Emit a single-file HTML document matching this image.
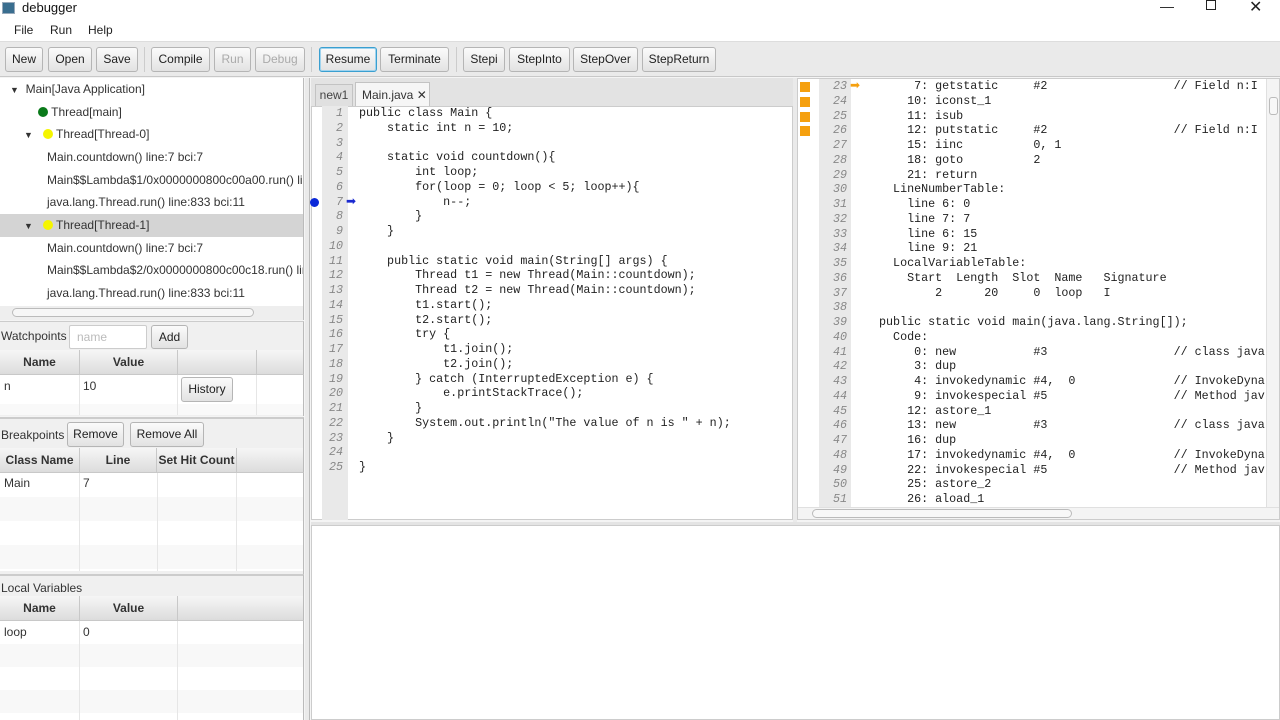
<!DOCTYPE html>
<html><head><meta charset="utf-8"><style>
*{box-sizing:border-box;margin:0;padding:0}
body{width:1280px;height:720px;overflow:hidden;background:#f4f4f4;font-family:"Liberation Sans",sans-serif;font-size:12px;color:#333;position:relative}
.a{position:absolute}
.btn{position:absolute;top:47px;height:25px;border:1px solid #b5b5b5;border-radius:3px;background:linear-gradient(#fbfbfb,#e2e2e2);font-size:12px;line-height:23px;text-align:center;color:#222}
.dis{color:#aaa}
.mono{font-family:"Liberation Mono",monospace;font-size:11.7px;line-height:14.75px;white-space:pre;color:#222}
.ln{font-family:"Liberation Mono",monospace;font-size:11.7px;line-height:14.75px;white-space:pre;color:#888;font-style:italic;text-align:right}
.tr{position:absolute;left:0;font-size:12px;line-height:22.7px;white-space:nowrap;color:#333}
.hdr{position:absolute;height:25px;background:linear-gradient(#f6f6f6,#dcdcdc);border-right:1px solid #c8c8c8;border-bottom:1px solid #c8c8c8;font-weight:bold;text-align:center;line-height:24px;font-size:12px;color:#333}
.row{position:absolute;left:0;width:303px;border-bottom:1px solid #f0f0f0}
.vl{position:absolute;width:1px;background:#e6e6e6}
</style></head><body>
<!-- title -->
<div class="a" style="left:0;top:0;width:1280px;height:20px;background:#fff"></div>
<div class="a" style="left:2px;top:2px;width:13px;height:12px;background:#3a6e8f;border:1px solid #9ab"></div>
<div class="a" style="left:22px;top:0;font-size:13px;line-height:16px;color:#111">debugger</div>
<div class="a" style="left:1160px;top:-2px;font-size:14px;color:#222">—</div>
<div class="a" style="left:1206px;top:0;width:10px;height:10px;border:1px solid #222"></div>
<div class="a" style="left:1249px;top:-3px;font-size:16px;color:#222">✕</div>
<!-- menu -->
<div class="a" style="left:0;top:20px;width:1280px;height:22px;background:#fff;border-bottom:1px solid #ddd"></div>
<div class="a" style="left:14px;top:23px;font-size:12px;color:#222">File</div>
<div class="a" style="left:50px;top:23px;font-size:12px;color:#222">Run</div>
<div class="a" style="left:88px;top:23px;font-size:12px;color:#222">Help</div>
<!-- toolbar -->
<div class="a" style="left:0;top:42px;width:1280px;height:35px;background:#eaeaea;border-bottom:1px solid #c8c8c8"></div>
<div class="btn" style="left:5px;width:38px">New</div>
<div class="btn" style="left:48px;width:44px">Open</div>
<div class="btn" style="left:96px;width:42px">Save</div>
<div class="btn" style="left:151px;width:59px">Compile</div>
<div class="btn dis" style="left:214px;width:37px">Run</div>
<div class="btn dis" style="left:255px;width:50px">Debug</div>
<div class="btn" style="left:319px;width:58px;border:1px solid #3a9fd0;box-shadow:0 0 0 1px #9fd3ee inset">Resume</div>
<div class="btn" style="left:380px;width:69px">Terminate</div>
<div class="btn" style="left:463px;width:42px">Stepi</div>
<div class="btn" style="left:509px;width:61px">StepInto</div>
<div class="btn" style="left:573px;width:65px">StepOver</div>
<div class="btn" style="left:642px;width:74px">StepReturn</div>
<div class="a" style="left:144px;top:47px;width:1px;height:25px;background:#ccc"></div>
<div class="a" style="left:311px;top:47px;width:1px;height:25px;background:#ccc"></div>
<div class="a" style="left:456px;top:47px;width:1px;height:25px;background:#ccc"></div>

<!-- left panel tree -->
<div class="a" style="left:0;top:78px;width:304px;height:228px;background:#fff;border-right:1px solid #bbb;overflow:hidden">
<div class="a" style="left:0;top:136px;width:304px;height:23px;background:#d4d4d4"></div>
<div class="tr" style="top:0;left:10px"><span style="font-size:9px">▼</span>&nbsp; Main[Java Application]</div>
<div class="tr" style="top:23px;left:38px"><span style="display:inline-block;width:10px;height:10px;border-radius:50%;background:#0a7a1a;vertical-align:-1px"></span> Thread[main]</div>
<div class="tr" style="top:45px;left:24px"><span style="font-size:9px">▼</span>&nbsp;&nbsp; <span style="display:inline-block;width:10px;height:10px;border-radius:50%;background:#f5f500;vertical-align:-1px"></span> Thread[Thread-0]</div>
<div class="tr" style="top:68px;left:47px">Main.countdown() line:7 bci:7</div>
<div class="tr" style="top:91px;left:47px">Main$$Lambda$1/0x0000000800c00a00.run() line:</div>
<div class="tr" style="top:113px;left:47px">java.lang.Thread.run() line:833 bci:11</div>
<div class="tr" style="top:136px;left:24px"><span style="font-size:9px">▼</span>&nbsp;&nbsp; <span style="display:inline-block;width:10px;height:10px;border-radius:50%;background:#f5f500;vertical-align:-1px"></span> Thread[Thread-1]</div>
<div class="tr" style="top:159px;left:47px">Main.countdown() line:7 bci:7</div>
<div class="tr" style="top:181px;left:47px">Main$$Lambda$2/0x0000000800c00c18.run() line:</div>
<div class="tr" style="top:204px;left:47px">java.lang.Thread.run() line:833 bci:11</div>
</div>
<div class="a" style="left:0;top:306px;width:304px;height:14px;background:#eee;border-right:1px solid #bbb"></div>
<div class="a" style="left:12px;top:308px;width:242px;height:9px;border:1px solid #bbb;border-radius:5px;background:#f6f6f6"></div>
<!-- watchpoints -->
<div class="a" style="left:0;top:321px;width:304px;height:95px;background:#f0f0f0;border-top:1px solid #ccc;border-right:1px solid #bbb"></div>
<div class="a" style="left:1px;top:329px;font-size:12px">Watchpoints</div>
<div class="a" style="left:69px;top:325px;width:78px;height:24px;background:#fff;border:1px solid #ccc;border-radius:2px;color:#bbb;padding-left:7px;line-height:22px">name</div>
<div class="btn" style="left:151px;top:325px;width:37px;height:24px;line-height:22px">Add</div>
<div class="hdr" style="left:0;top:350px;width:80px">Name</div>
<div class="hdr" style="left:80px;top:350px;width:98px">Value</div>
<div class="hdr" style="left:178px;top:350px;width:79px"></div>
<div class="hdr" style="left:257px;top:350px;width:47px;border-right:1px solid #bbb"></div>
<div class="a" style="left:0;top:375px;width:304px;height:40px;background:#fff;border-right:1px solid #bbb"></div>
<div class="a" style="left:0;top:404px;width:304px;height:11px;background:#f9f9f9;border-right:1px solid #bbb"></div>
<div class="vl" style="left:79px;top:375px;height:40px"></div><div class="vl" style="left:177px;top:375px;height:40px"></div><div class="vl" style="left:256px;top:375px;height:40px"></div>
<div class="a" style="left:4px;top:379px">n</div>
<div class="a" style="left:83px;top:379px">10</div>
<div class="btn" style="left:181px;top:377px;width:52px;height:25px">History</div>
<!-- breakpoints -->
<div class="a" style="left:0;top:417px;width:304px;height:160px;background:#f0f0f0;border-top:2px solid #ccc;border-right:1px solid #bbb"></div>
<div class="a" style="left:1px;top:428px">Breakpoints</div>
<div class="btn" style="left:67px;top:422px;width:57px;height:25px">Remove</div>
<div class="btn" style="left:130px;top:422px;width:74px;height:25px">Remove All</div>
<div class="hdr" style="left:0;top:448px;width:80px">Class Name</div>
<div class="hdr" style="left:80px;top:448px;width:77px">Line</div>
<div class="hdr" style="left:157px;top:448px;width:80px">Set Hit Count</div>
<div class="hdr" style="left:237px;top:448px;width:67px;border-right:1px solid #bbb"></div>
<div class="a" style="left:0;top:473px;width:304px;height:98px;background:#fff;border-right:1px solid #bbb;background-image:repeating-linear-gradient(#fff 0 24px,#f8f8f8 24px 48px)"></div>
<div class="vl" style="left:79px;top:473px;height:98px"></div><div class="vl" style="left:157px;top:473px;height:98px"></div><div class="vl" style="left:236px;top:473px;height:98px"></div>
<div class="a" style="left:4px;top:476px">Main</div>
<div class="a" style="left:83px;top:476px">7</div>
<!-- local variables -->
<div class="a" style="left:0;top:574px;width:304px;height:146px;background:#f0f0f0;border-top:2px solid #ccc;border-right:1px solid #bbb"></div>
<div class="a" style="left:1px;top:581px">Local Variables</div>
<div class="hdr" style="left:0;top:596px;width:80px">Name</div>
<div class="hdr" style="left:80px;top:596px;width:98px">Value</div>
<div class="hdr" style="left:178px;top:596px;width:126px;border-right:1px solid #bbb"></div>
<div class="a" style="left:0;top:621px;width:304px;height:99px;border-right:1px solid #bbb;background-image:repeating-linear-gradient(#fff 0 23px,#f8f8f8 23px 46px)"></div>
<div class="vl" style="left:79px;top:621px;height:99px"></div><div class="vl" style="left:177px;top:621px;height:99px"></div>
<div class="a" style="left:4px;top:625px">loop</div>
<div class="a" style="left:83px;top:625px">0</div>

<!-- splitter -->
<div class="a" style="left:305px;top:78px;width:5px;height:642px;background:#eaeaea;border-right:1px solid #bbb"></div>

<!-- editor -->
<div class="a" style="left:311px;top:78px;width:482px;height:28px;background:#e3e3e3"></div>
<div class="a" style="left:315px;top:84px;width:38px;height:22px;background:#e0e0e0;border:1px solid #c3c3c3;border-bottom:none;text-align:center;line-height:21px;color:#444">new1</div>
<div class="a" style="left:355px;top:82px;width:75px;height:24px;background:#f6f6f6;border:1px solid #c3c3c3;border-bottom:none;padding-left:6px;line-height:24px;color:#333">Main.java ✕</div>
<div class="a" style="left:311px;top:106px;width:482px;height:414px;background:#fff;border:1px solid #ccc"></div>
<div class="a" style="left:322px;top:106px;width:26px;height:414px;background:#e9e9e9"></div>
<div class="a ln" style="left:322px;top:106px;width:21px">1
2
3
4
5
6
7
8
9
10
11
12
13
14
15
16
17
18
19
20
21
22
23
24
25</div>
<div class="a" style="left:310px;top:198px;width:9px;height:9px;border-radius:50%;background:#0a28d8"></div>
<div class="a" style="left:346px;top:194px;color:#1a2ad0;font-size:12px">➡</div>
<div class="a mono" style="left:359px;top:106px">public class Main {
    static int n = 10;

    static void countdown(){
        int loop;
        for(loop = 0; loop &lt; 5; loop++){
            n--;
        }
    }

    public static void main(String[] args) {
        Thread t1 = new Thread(Main::countdown);
        Thread t2 = new Thread(Main::countdown);
        t1.start();
        t2.start();
        try {
            t1.join();
            t2.join();
        } catch (InterruptedException e) {
            e.printStackTrace();
        }
        System.out.println("The value of n is " + n);
    }

}</div>

<!-- splitter2 -->
<div class="a" style="left:793px;top:78px;width:4px;height:444px;background:#eaeaea"></div>
<!-- bytecode pane -->
<div class="a" style="left:797px;top:78px;width:483px;height:442px;background:#fff;border:1px solid #ccc;overflow:hidden">
<div class="a" style="left:21px;top:0;width:32px;height:442px;background:#e9e9e9"></div>
<div class="a" style="left:2px;top:3px;width:10px;height:10px;background:#f5a00f"></div>
<div class="a" style="left:2px;top:18px;width:10px;height:10px;background:#f5a00f"></div>
<div class="a" style="left:2px;top:33px;width:10px;height:10px;background:#f5a00f"></div>
<div class="a" style="left:2px;top:47px;width:10px;height:10px;background:#f5a00f"></div>
<div class="a" style="left:52px;top:-1px;color:#f5a00f;font-size:12px">➡</div>
<div class="a ln" style="left:21px;top:0;width:28px">23
24
25
26
27
28
29
30
31
32
33
34
35
36
37
38
39
40
41
42
43
44
45
46
47
48
49
50
51</div>
<div class="a mono" style="left:67px;top:0">       7: getstatic     #2                  // Field n:I
      10: iconst_1
      11: isub
      12: putstatic     #2                  // Field n:I
      15: iinc          0, 1
      18: goto          2
      21: return
    LineNumberTable:
      line 6: 0
      line 7: 7
      line 6: 15
      line 9: 21
    LocalVariableTable:
      Start  Length  Slot  Name   Signature
          2      20     0  loop   I

  public static void main(java.lang.String[]);
    Code:
       0: new           #3                  // class java
       3: dup
       4: invokedynamic #4,  0              // InvokeDyna
       9: invokespecial #5                  // Method jav
      12: astore_1
      13: new           #3                  // class java
      16: dup
      17: invokedynamic #4,  0              // InvokeDyna
      22: invokespecial #5                  // Method jav
      25: astore_2
      26: aload_1</div>
<div class="a" style="left:468px;top:0;width:14px;height:428px;background:#f4f4f4;border-left:1px solid #e0e0e0"></div>
<div class="a" style="left:471px;top:18px;width:9px;height:18px;border:1px solid #bbb;border-radius:3px;background:#f8f8f8"></div>
<div class="a" style="left:0;top:428px;width:482px;height:14px;background:#f4f4f4;border-top:1px solid #e0e0e0"></div>
<div class="a" style="left:14px;top:430px;width:260px;height:9px;border:1px solid #bbb;border-radius:5px;background:#f8f8f8"></div>
</div>
<!-- bottom pane -->
<div class="a" style="left:311px;top:522px;width:969px;height:3px;background:#e4e4e4"></div>
<div class="a" style="left:311px;top:525px;width:969px;height:195px;background:#fff;border:1px solid #ccc"></div>
</body></html>
